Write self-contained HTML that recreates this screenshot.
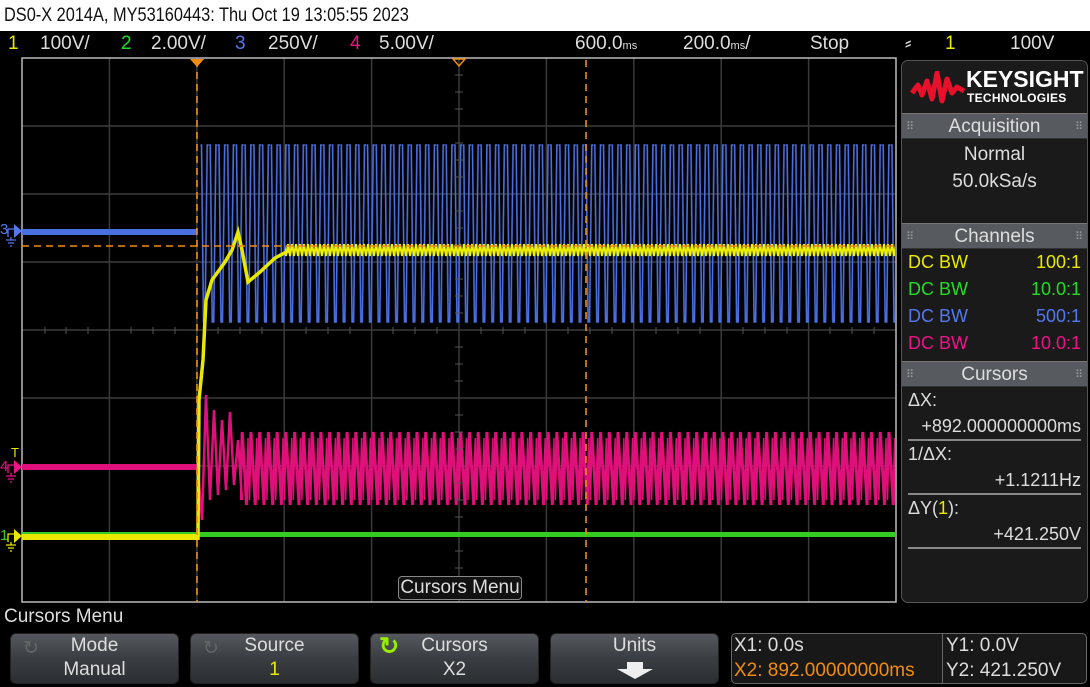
<!DOCTYPE html>
<html><head><meta charset="utf-8"><style>
*{margin:0;padding:0;box-sizing:border-box}
body{width:1090px;height:686px;background:#000;position:relative;overflow:hidden;font-family:"Liberation Sans Narrow","Liberation Sans",sans-serif;color:#ddd}
.a{position:absolute;white-space:nowrap}
.title{left:0;top:0;width:1090px;height:31px;background:#fff;color:#111;font-size:19px;line-height:31px;padding-left:4px;transform-origin:0 0;}
.bar{top:31px;height:26px;font-size:19px;line-height:26px}
.btn{position:absolute;top:633px;height:51px;width:169px;border-radius:6px;background:linear-gradient(#55595d,#3a3e42 50%,#2b2e31);border:1px solid #222;text-align:center;font-size:19px;line-height:24px;color:#ddd}
.panel{position:absolute;left:901px;width:187px}
.hdr{background:#575b5f;color:#ddd;text-align:center;font-size:19px;height:26px;line-height:26px;border-top:1px solid #777;border-bottom:1px solid #333}
.hdr:before{content:"⠿";position:absolute;left:4px;font-size:11px;color:#999}
.hdr:after{content:"⠿";position:absolute;right:4px;font-size:11px;color:#999}
.row{font-size:18px;height:27px;line-height:27px;padding:0 6px;display:flex;justify-content:space-between}
</style></head><body>
<div class="a title"><span style="display:inline-block;transform:scaleX(0.86);transform-origin:0 0">DS0-X 2014A, MY53160443: Thu Oct 19 13:05:55 2023</span></div>
<div class="a bar" style="left:8px;color:#e8e800">1</div>
<div class="a bar" style="left:40px">100V/</div>
<div class="a bar" style="left:121px;color:#22dd22">2</div>
<div class="a bar" style="left:151px">2.00V/</div>
<div class="a bar" style="left:235px;color:#5577ee">3</div>
<div class="a bar" style="left:268px">250V/</div>
<div class="a bar" style="left:350px;color:#ee1188">4</div>
<div class="a bar" style="left:379px">5.00V/</div>
<div class="a bar" style="left:575px">600.0<span style="font-size:11px">ms</span></div>
<div class="a bar" style="left:683px">200.0<span style="font-size:11px">ms</span>/</div>
<div class="a bar" style="left:810px">Stop</div>
<div class="a bar" style="left:905px">⸗</div>
<div class="a bar" style="left:945px;color:#e8e800">1</div>
<div class="a bar" style="left:1010px">100V</div>

<svg class="a" style="left:0;top:0" width="1090" height="686">
<defs>
<pattern id="bl" x="200" y="0" width="8.74" height="686" patternUnits="userSpaceOnUse">
<path d="M0.5 145 L1.5 145 L3.5 322 L5 322 L7.2 145 L8.74 145" stroke="#4a6fe0" stroke-width="1.6" fill="none"/>
</pattern>
<pattern id="pk" x="240" y="0" width="8.74" height="686" patternUnits="userSpaceOnUse">
<path d="M0 500 L2.2 432 L4.4 468 L6.5 505 L8.74 438" stroke="#e0107a" stroke-width="3" fill="none"/>
</pattern>
<pattern id="yl" x="0" y="0" width="4" height="686" patternUnits="userSpaceOnUse">
<path d="M0 244 L2 256 L4 244" stroke="#f0f000" stroke-width="2" fill="none"/>
</pattern>
</defs>
<g stroke="#3a3a3a" stroke-width="1.5">
<line x1="109.4" y1="58" x2="109.4" y2="602"/><line x1="196.8" y1="58" x2="196.8" y2="602"/><line x1="284.2" y1="58" x2="284.2" y2="602"/><line x1="371.6" y1="58" x2="371.6" y2="602"/><line x1="459" y1="58" x2="459" y2="602"/><line x1="546.4" y1="58" x2="546.4" y2="602"/><line x1="633.8" y1="58" x2="633.8" y2="602"/><line x1="721.2" y1="58" x2="721.2" y2="602"/><line x1="808.6" y1="58" x2="808.6" y2="602"/>
<line x1="22" y1="126" x2="896" y2="126"/><line x1="22" y1="194" x2="896" y2="194"/><line x1="22" y1="262" x2="896" y2="262"/><line x1="22" y1="330" x2="896" y2="330"/><line x1="22" y1="398" x2="896" y2="398"/><line x1="22" y1="466" x2="896" y2="466"/><line x1="22" y1="534" x2="896" y2="534"/>
</g>
<path d="M22 58 H896 V602 H22 Z" stroke="#bbb" stroke-width="1.5" fill="none"/>
<rect x="22" y="229" width="175" height="6" fill="#4a6fe0"/>
<rect x="200" y="140" width="695" height="186" fill="url(#bl)"/>
<rect x="22" y="464" width="176" height="6" fill="#e0107a"/>
<rect x="240" y="425" width="655" height="85" fill="url(#pk)"/>
<path d="M198 470 L202 520 L206 395 L210 500 L214 410 L218 495 L222 420 L226 490 L230 412 L234 485 L238 440 L242 500" stroke="#e0107a" stroke-width="2.5" fill="none"/>
<rect x="22" y="532" width="873" height="5" fill="#33cc22"/>
<rect x="22" y="534" width="176" height="6" fill="#e8e800"/>
<path d="M198 540 L199 400 L203 360 L206 300 L212 280 L225 262 L232 250 L238 232 L242 250 L248 282 L260 272 L275 258 L290 250" stroke="#e8e800" stroke-width="3.5" fill="none"/>
<rect x="285" y="243" width="610" height="15" fill="url(#yl)"/>
<g stroke="#f08c10" stroke-width="1.6" stroke-dasharray="7 5">
<line x1="197" y1="60" x2="197" y2="602"/><line x1="586" y1="60" x2="586" y2="602"/><line x1="22" y1="246" x2="895" y2="246"/>
</g>
<path d="M190 59 L204 59 L197 67 Z" fill="#f08c10"/>
<path d="M453 59 L465 59 L459 66 Z" fill="none" stroke="#f08c10" stroke-width="1.5"/>
<g stroke="#555" stroke-width="1">
<path d="M45 327v7M66 327v7M88 327v7M131 327v7M153 327v7M175 327v7M218 327v7M240 327v7M262 327v7M306 327v7M328 327v7M350 327v7M393 327v7M415 327v7M437 327v7M481 327v7M503 327v7M525 327v7M568 327v7M590 327v7M612 327v7M656 327v7M678 327v7M700 327v7M743 327v7M765 327v7M787 327v7M830 327v7M852 327v7M874 327v7"/>
<path d="M455 75h8M455 92h8M455 109h8M455 143h8M455 160h8M455 177h8M455 211h8M455 228h8M455 245h8M455 279h8M455 296h8M455 313h8M455 347h8M455 364h8M455 381h8M455 415h8M455 432h8M455 449h8M455 483h8M455 500h8M455 517h8M455 551h8M455 568h8M455 585h8"/>
</g>
<g fill="none" stroke-width="1.3">
<path d="M8 237 V229 H14 M11 237 V240 M6 240 H16 M8 243 H14 M10 246 H12" stroke="#5577ee"/>
<path d="M8 473 V465 H14 M11 473 V476 M6 476 H16 M8 479 H14 M10 482 H12" stroke="#ee1188"/>
<path d="M8 542 V534 H14 M11 542 V545 M6 545 H16 M8 548 H14 M10 551 H12" stroke="#e8e800"/>
</g>
<path d="M14 224 L22 231 L14 238 Z" fill="#5577ee"/><text x="0" y="234" fill="#5577ee" font-size="15" font-family="Liberation Sans">3</text>
<path d="M14 460 L22 467 L14 474 Z" fill="#ee1188"/><text x="0" y="471" fill="#ee1188" font-size="15" font-family="Liberation Sans">4</text>
<text x="11" y="457" fill="#e8e800" font-size="13" font-family="Liberation Sans">T</text>
<path d="M14 529 L22 536 L14 543 Z" fill="#e8e800"/><text x="0" y="540" fill="#33cc22" font-size="15" font-family="Liberation Sans">1</text>
</svg>

<div class="a" style="left:398px;top:576px;width:124px;height:24px;border:1px solid #888;border-radius:4px;background:#111;font-size:19px;line-height:22px;text-align:center">Cursors Menu</div>

<div class="panel" style="top:60px;height:543px;border:1px solid #555;border-radius:7px;background:#1a1a1a;overflow:hidden">
 <div style="height:52px;position:relative;background:#1a1a1a">
  <svg class="a" style="left:8px;top:10px" width="56" height="34"><path d="M2 22 L8 14 L12 24 L17 10 L22 28 L27 2 L32 30 L37 8 L42 22 L47 16 L54 20" stroke="#e8102a" stroke-width="5" fill="none" stroke-linejoin="round"/></svg>
  <div class="a" style="left:64px;top:5px;color:#fff;font-size:23px;font-weight:bold;font-family:'Liberation Sans',sans-serif">KEYSIGHT</div>
  <div class="a" style="left:65px;top:30px;color:#fff;font-size:12px;font-weight:bold;font-family:'Liberation Sans',sans-serif;letter-spacing:0.3px">TECHNOLOGIES</div>
 </div>
 <div class="hdr" style="position:relative">Acquisition</div>
 <div style="height:84px;text-align:center;font-size:19px;line-height:27px;padding-top:2px">Normal<br>50.0kSa/s</div>
 <div class="hdr" style="position:relative">Channels</div>
 <div class="row" style="color:#e8e800"><span>DC BW</span><span>100:1</span></div>
 <div class="row" style="color:#22dd22"><span>DC BW</span><span>10.0:1</span></div>
 <div class="row" style="color:#5577ee"><span>DC BW</span><span>500:1</span></div>
 <div class="row" style="color:#ee1188"><span>DC BW</span><span>10.0:1</span></div>
 <div class="hdr" style="position:relative;margin-top:4px">Cursors</div>
 <div style="font-size:18px;line-height:26px;padding:0 6px">
  <div>ΔX:</div><div style="text-align:right;border-bottom:2px solid #888">+892.000000000ms</div>
  <div>1/ΔX:</div><div style="text-align:right;border-bottom:2px solid #888">+1.1211Hz</div>
  <div>ΔY(<span style="color:#e8e800">1</span>):</div><div style="text-align:right;border-bottom:2px solid #888">+421.250V</div>
 </div>
</div>

<div class="a" style="left:4px;top:606px;font-size:19px">Cursors Menu</div>
<div class="btn" style="left:10px"><span class="a" style="left:12px;top:3px;color:#666">↻</span>Mode<br>Manual</div>
<div class="btn" style="left:190px"><span class="a" style="left:12px;top:3px;color:#666">↻</span>Source<br><span style="color:#e8e800">1</span></div>
<div class="btn" style="left:370px"><span class="a" style="left:8px;top:1px;color:#99ee00;font-size:24px;font-weight:bold">↻</span>Cursors<br>X2</div>
<div class="btn" style="left:550px">Units<br><svg width="40" height="20" style="margin-top:2px"><path d="M12 2 H28 V9 H38 L20 19 L2 9 H12 Z" fill="#eee"/></svg></div>
<div class="a" style="left:731px;top:633px;width:356px;height:51px;border:1px solid #666;border-radius:5px;background:#181818"></div>
<div class="a" style="left:942px;top:634px;width:1px;height:49px;background:#666"></div>
<div class="a" style="left:734px;top:633px;font-size:19px;line-height:25px">X1: 0.0s<br><span style="color:#f08c10">X2: 892.00000000ms</span></div>
<div class="a" style="left:946px;top:633px;font-size:19px;line-height:25px">Y1: 0.0V<br>Y2: 421.250V</div>
</body></html>
